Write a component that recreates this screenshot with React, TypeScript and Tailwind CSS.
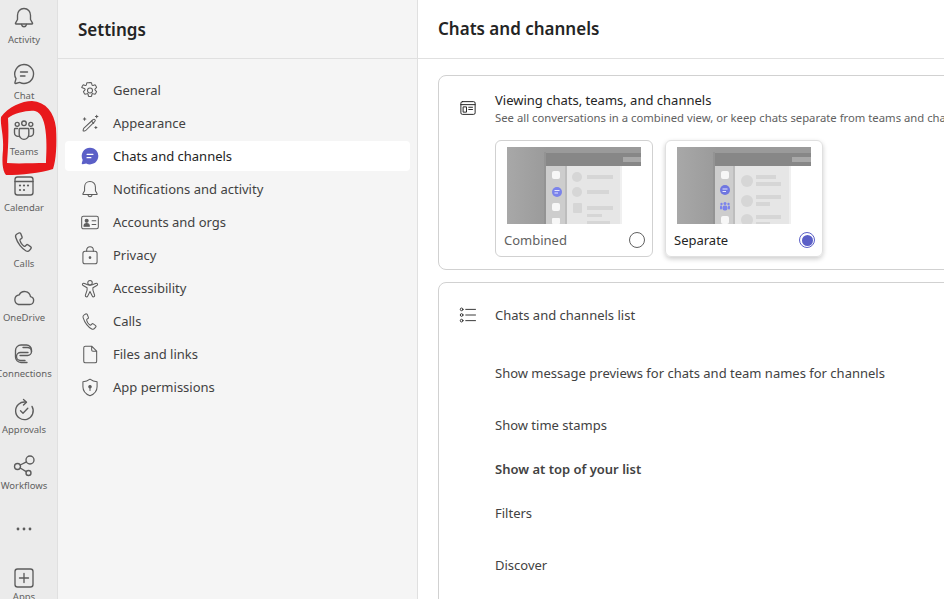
import React from "react";

const S = ({ children, size = 24, sw = 1.35, color = "#5c5c5c" }: { children: React.ReactNode; size?: number; sw?: number; color?: string }) => (
  <svg width={size} height={size} viewBox="0 0 24 24" fill="none" stroke={color} strokeWidth={sw} strokeLinecap="round" strokeLinejoin="round">
    {children}
  </svg>
);

const rail: { label: string; tight: boolean; icon: React.ReactNode }[] = [
  { label: "Activity", tight: false, icon: <S><path d="M12 2.500c-4 0-6.500 3-6.500 6.700v4.300l-2 3.600c-.2.400 0 .9.500.9h16c.5 0 .7-.5.500-.9l-2-3.600V9.200c0-3.700-2.500-6.700-6.500-6.700Z"/><path d="M9.500 18.500c.3 1.400 1.200 2.200 2.500 2.200s2.200-.8 2.500-2.200"/></S> },
  { label: "Chat", tight: false, icon: <S><path d="M12 2.500a9.500 9.500 0 1 1-4.400 17.900l-3.900 1.100c-.5.100-1-.3-.8-.9l1.100-3.900A9.500 9.500 0 0 1 12 2.500Z"/><path d="M8.500 10h7M8.500 14h4.500"/></S> },
  { label: "Teams", tight: false, icon: <S><circle cx="12" cy="5.300" r="2.300"/><circle cx="5.200" cy="6.300" r="2"/><circle cx="18.800" cy="6.300" r="2"/><path d="M8 10.500h8c.5 0 .8.300.8.800v5.200a4.800 4.800 0 0 1-9.600 0v-5.200c0-.5.300-.8.800-.8Z"/><path d="M5.500 10.500H3.300c-.5 0-.8.300-.8.800v3.700c0 2.200 1.800 3.500 3.900 3.300M18.500 10.500h2.200c.5 0 .8.300.8.800v3.700c0 2.200-1.800 3.500-3.900 3.300"/></S> },
  { label: "Calendar", tight: false, icon: <S><rect x="3" y="3" width="18" height="18" rx="2.500"/><path d="M3 7.500h18"/><g fill="#5c5c5c" stroke="none"><circle cx="8" cy="11.500" r="1.100"/><circle cx="12" cy="11.500" r="1.100"/><circle cx="16" cy="11.500" r="1.100"/><circle cx="8" cy="16" r="1.100"/><circle cx="12" cy="16" r="1.100"/></g></S> },
  { label: "Calls", tight: false, icon: <S><path d="M6.800 3 5 4c-1.200.7-1.700 2-1.300 3.300 1 3.200 2.500 6 4.400 8.400 1.800 2.300 3.800 4.200 6 5.300 1.200.6 2.600.3 3.400-.7l1.500-1.800c.4-.5.3-1.200-.2-1.600l-2.900-2.100c-.5-.3-1.100-.3-1.500.1l-1.100 1.100c-.4.4-.9.4-1.300.2-1-.7-2-1.700-2.700-2.800-.6-1-1-2-1.300-3-.1-.5 0-.9.4-1.200l1.200-.8c.5-.3.7-.9.5-1.400L8.700 3.600C8.400 2.900 7.500 2.600 6.800 3Z"/></S> },
  { label: "OneDrive", tight: true, icon: <S><path d="M6.500 18.500h11a4 4 0 0 0 1-7.900 6 6 0 0 0-11.300-1.700A4.900 4.900 0 0 0 6.500 18.500Z"/></S> },
  { label: "Connections", tight: true, icon: <S><path d="M19.500 9.500V8a5 5 0 0 0-5-5H9a5.500 5.500 0 0 0-5.500 5.500V15A5.500 5.500 0 0 0 9 20.500h6"/><path d="M8 13.500h7.500a4 4 0 0 0 0-8H11"/><path d="M16 10.500H8.500a4 4 0 0 0 0 8H13"/></S> },
  { label: "Approvals", tight: true, icon: <S><path d="M14 4.200A8.800 8.800 0 1 0 20 8.400"/><path d="M11.500 1.500 14.500 4.200 11.500 7"/><path d="m8.500 12.800 2.500 2.500 4.800-5"/></S> },
  { label: "Workflows", tight: true, icon: <S><circle cx="18" cy="6" r="4"/><circle cx="5.500" cy="12.500" r="3"/><circle cx="16.500" cy="19" r="2.500"/><path d="m8.200 11 6.300-3.200M8.200 14l6 3.600"/></S> },
];

const navIcon = (d: React.ReactNode) => <S size={21} sw={1.25}>{d}</S>;

const nav: { label: string; active?: boolean; icon: React.ReactNode }[] = [
  { label: "General", icon: navIcon(<><circle cx="12" cy="12" r="3"/><path d="M10.200 2.800c1.200-.3 2.400-.3 3.600 0l.6 2.400c.1.500.8.900 1.300.7l2.400-.7c.8.900 1.400 2 1.800 3.100l-1.700 1.700c-.4.400-.4 1.200 0 1.600l1.700 1.800c-.4 1.100-1 2.200-1.800 3.100l-2.400-.7c-.5-.2-1.200.2-1.300.7l-.6 2.400c-1.200.3-2.400.3-3.600 0l-.6-2.400c-.1-.5-.8-.9-1.300-.7l-2.400.7c-.8-.9-1.400-2-1.800-3.100l1.700-1.800c.4-.4.4-1.200 0-1.600L2.100 8.300c.4-1.100 1-2.200 1.800-3.100l2.400.7c.5.2 1.200-.2 1.300-.7l.6-2.400Z"/></>) },
  { label: "Appearance", icon: navIcon(<><path d="M15.500 7.500c.8-.8 1.900-.8 2.400-.2.600.6.500 1.600-.3 2.400L7.200 20.100c-.6.600-3.100 1.200-3.400.9-.3-.3.3-2.800.9-3.400L15.500 7.500Z"/><path d="m13.800 9.200 2.600 2.600"/><path d="M20 2v3M18.500 3.500h3M5.500 5v3M4 6.500h3M19 15.500v2.500M17.800 16.800h2.500"/></>) },
  { label: "Chats and channels", active: true, icon: <svg width="20" height="20" viewBox="0 0 24 24"><path fill="#5b5fc7" d="M12 2a10 10 0 1 1-4.600 18.900l-4 1.100c-.8.200-1.500-.5-1.300-1.300l1.100-4A10 10 0 0 1 12 2Z"/><path d="M8.500 10h7M8.500 14h4.500" stroke="#fff" strokeWidth="1.600" strokeLinecap="round"/></svg> },
  { label: "Notifications and activity", icon: navIcon(<><path d="M12 2.500c-4 0-6.500 3-6.500 6.700v4.300l-2 3.600c-.2.400 0 .9.500.9h16c.5 0 .7-.5.500-.9l-2-3.600V9.200c0-3.700-2.500-6.700-6.500-6.700Z"/><path d="M9.500 18.500c.3 1.400 1.200 2.200 2.500 2.200s2.200-.8 2.500-2.200"/></>) },
  { label: "Accounts and orgs", icon: navIcon(<><rect x="2" y="4.500" width="20" height="15" rx="2"/><circle cx="8" cy="10" r="1.800" fill="#5c5c5c"/><path d="M4.800 16.500c0-4.200 6.400-4.200 6.400 0Z" fill="#5c5c5c"/><path d="M14.500 10H19M14.500 14.500H19"/></>) },
  { label: "Privacy", icon: navIcon(<><rect x="3.500" y="7" width="17" height="15" rx="2.500"/><path d="M8 7V5.500a4 4 0 0 1 8 0V7"/><circle cx="12" cy="14.500" r="1" fill="#5c5c5c"/></>) },
  { label: "Accessibility", icon: navIcon(<><circle cx="12" cy="5" r="2.700"/><path d="M3 6.500c.6-1 1.500-1 2.500-.5 2 1 4 2 6.500 2s4.500-1 6.500-2c1-.5 1.900-.5 2.500.5.400.8 0 1.500-.8 2L15.500 11v3l2 6c.3 1-.2 1.800-1 2-.8.2-1.400-.2-1.800-1L12 15.500 9.300 21c-.4.800-1 1.200-1.800 1-.8-.2-1.300-1-1-2l2-6v-3L3.800 8.500c-.8-.5-1.200-1.200-.8-2Z"/></>) },
  { label: "Calls", icon: navIcon(<path d="M6.800 3 5 4c-1.200.7-1.700 2-1.300 3.300 1 3.200 2.500 6 4.400 8.400 1.800 2.300 3.800 4.200 6 5.300 1.200.6 2.600.3 3.400-.7l1.500-1.800c.4-.5.3-1.200-.2-1.600l-2.900-2.100c-.5-.3-1.100-.3-1.500.1l-1.100 1.100c-.4.4-.9.4-1.300.2-1-.7-2-1.700-2.700-2.800-.6-1-1-2-1.300-3-.1-.5 0-.9.4-1.200l1.200-.8c.5-.3.7-.9.5-1.400L8.700 3.600C8.400 2.900 7.500 2.600 6.800 3Z"/>) },
  { label: "Files and links", icon: navIcon(<path d="M6.500 2h7.500l6 6v12c0 1.100-.9 2-2 2H6.500c-1.100 0-2-.9-2-2V4c0-1.100.9-2 2-2ZM14 2v4.500c0 .8.700 1.500 1.500 1.500H20"/>) },
  { label: "App permissions", icon: navIcon(<><path d="M12 2c2.500 2 5.200 3 8.500 3.200V11c0 5-3 8.700-8.500 11-5.500-2.300-8.500-6-8.500-11V5.200C6.800 5 9.500 4 12 2Z"/><circle cx="12" cy="11" r="1.500" fill="#5c5c5c"/><path d="M12 12v3.500"/></>) },
];

const Frame = ({ id, x, railW, listX, listW }: { id: string; x: number; railW: number; listX: number; listW: number }) => (
  <>
    <defs>
      <linearGradient id={id} x1="0" x2="1">
        <stop offset="0" stopColor="#a8a8a8" />
        <stop offset="0.3" stopColor="#9a9a9a" />
      </linearGradient>
    </defs>
    <rect width="134" height="77" fill={`url(#${id})`} />
    <rect x={x - 2} y="5" width="2" height="72" fill="#939393" />
    <rect x={x} y="6" width={134 - x} height="71" fill="#fff" />
    <rect x={x} y="6" width={134 - x} height="13" fill="#878787" />
    <rect x={x + 77} y="10" width={134 - x - 77} height="5" fill="#a8a8a8" />
    <rect x={x} y="19" width={railW} height="58" fill="#cdcdcd" />
    <rect x={listX} y="19" width={listW} height="58" fill="#e6e6e6" />
    <rect x={listX - 2} y="19" width="2" height="58" fill="#bdbdbd" />
    <rect x={listX + listW} y="19" width="2" height="58" fill="#f0f0f0" />
  </>
);

const Combined = () => (
  <svg width="134" height="77" viewBox="0 0 134 77" className="block">
    <Frame id="g1" x={39} railW={19} listX={60} listW={53} />
    <rect x="45" y="24" width="8" height="8" rx="2" fill="#f7f7f7"/>
    <circle cx="50" cy="45" r="5" fill="#7b83eb"/>
    <path d="M47.500 43.500h5M47.500 46h3.500" stroke="#e6e6ff" strokeWidth="1"/>
    <rect x="45" y="56" width="8" height="8" rx="2" fill="#f7f7f7"/>
    <rect x="45" y="71" width="8" height="6" rx="1" fill="#f7f7f7"/>
    <circle cx="70" cy="30" r="5" fill="#d6d6d6"/><rect x="80" y="28" width="26" height="4" fill="#d6d6d6"/>
    <circle cx="70" cy="45" r="5" fill="#d6d6d6"/><rect x="80" y="43" width="22" height="4" fill="#d6d6d6"/>
    <rect x="66" y="56" width="9" height="10" rx="1" fill="#d6d6d6"/>
    <rect x="80" y="59" width="26" height="4" fill="#d6d6d6"/><rect x="80" y="67" width="15" height="3" fill="#d6d6d6"/><rect x="80" y="74" width="23" height="3" fill="#d6d6d6"/>
  </svg>
);

const Separate = () => (
  <svg width="134" height="77" viewBox="0 0 134 77" className="block">
    <Frame id="g2" x={38} railW={18} listX={58} listW={54} />
    <rect x="44" y="24" width="8" height="8" rx="2" fill="#f7f7f7"/>
    <circle cx="48" cy="43" r="5" fill="#6f76e0"/>
    <path d="M45.500 42h5M45.500 44.500h3.500" stroke="#e6e6ff" strokeWidth="1"/>
    <circle cx="48" cy="56.500" r="1.500" fill="#7b83eb"/><circle cx="44.500" cy="57" r="1.200" fill="#7b83eb"/><circle cx="51.500" cy="57" r="1.200" fill="#7b83eb"/>
    <rect x="45.500" y="58.500" width="5" height="5" rx="2" fill="#7b83eb"/><rect x="43" y="58.500" width="2" height="4" rx="1" fill="#7b83eb"/><rect x="51" y="58.500" width="2" height="4" rx="1" fill="#7b83eb"/>
    <rect x="44" y="69" width="8" height="8" rx="2" fill="#f7f7f7"/>
    <circle cx="70" cy="34" r="6" fill="#d6d6d6"/><rect x="79" y="28" width="20" height="4" fill="#d6d6d6"/><rect x="79" y="35" width="25" height="4" fill="#d6d6d6"/>
    <circle cx="70" cy="54" r="6" fill="#d6d6d6"/><rect x="79" y="48" width="25" height="4" fill="#d6d6d6"/><rect x="79" y="55" width="14" height="4" fill="#d6d6d6"/>
    <circle cx="70" cy="73" r="6" fill="#d6d6d6"/><rect x="79" y="68" width="25" height="4" fill="#d6d6d6"/><rect x="79" y="75" width="14" height="2" fill="#d6d6d6"/>
  </svg>
);

export default function App() {
  return (
    <div className="flex h-[599px] w-[944px] overflow-hidden bg-white text-[13px] text-[#424242]" style={{ fontFamily: '"Noto Sans", sans-serif' }}>
      {/* App rail */}
      <aside className="relative h-full w-[58px] shrink-0 overflow-hidden border-r border-[#e0e0e0] bg-[#ebebeb] pt-[6px]">
        {rail.map((r) => (
          <div key={r.label} className="flex h-14 w-12 flex-col items-center">
            {r.icon}
            <span className={`whitespace-nowrap text-[9.5px] leading-[14px] text-[#616161] ${r.tight ? "mt-px" : "mt-[3px]"}`}>{r.label}</span>
          </div>
        ))}
        <div className="flex h-14 w-12 justify-center pt-[7px]">
          <S><g fill="#5c5c5c" stroke="none"><circle cx="6" cy="12" r="1.400"/><circle cx="12" cy="12" r="1.400"/><circle cx="18" cy="12" r="1.400"/></g></S>
        </div>
        <div className="flex h-14 w-12 flex-col items-center">
          <S><rect x="3" y="3" width="18" height="18" rx="2.500"/><path d="M12 7.500v9M7.500 12h9"/></S>
          <span className="whitespace-nowrap text-[9.5px] leading-[14px] text-[#616161]">Apps</span>
        </div>
        <svg className="pointer-events-none absolute left-0 top-0" width="58" height="180" viewBox="0 0 58 180">
          <path
            fill="#e8191c"
            fillRule="evenodd"
            d="M1 117C8 107 22 101 32 101C46 102 54 112 56 128C57 145 56 160 53 169C40 173 22 175 6 175C2 170 2 160 3 150C4 135 0 125 1 117ZM8 118C14 113 28 110 35 111C42 113 45 122 46 135C47 148 46 158 46 163C33 163 18 164 7 163C8 150 9 135 8 118Z"
          />
        </svg>
      </aside>

      {/* Settings nav */}
      <nav className="h-full w-[360px] shrink-0 border-r border-[#e0e0e0] bg-[#f5f5f5]">
        <div className="flex h-[59px] items-center border-b border-[#e0e0e0] pl-5 pt-0.5 text-[17px] font-semibold text-[#242424]">Settings</div>
        <ul className="flex flex-col gap-[3px] pl-[7px] pr-[7px] pt-4">
          {nav.map((n) => (
            <li key={n.label} className={`flex h-[30px] items-center gap-[13px] rounded pl-[15px] ${n.active ? "bg-white text-[#242424]" : ""}`}>
              <span className="flex h-5 w-5 items-center justify-center">{n.icon}</span>
              <span className="pt-0.5">{n.label}</span>
            </li>
          ))}
        </ul>
      </nav>

      {/* Main */}
      <main className="h-full min-w-0 flex-1 overflow-hidden">
        <div className="flex h-[59px] items-center border-b border-[#e0e0e0] pl-5 text-[17px] font-semibold text-[#242424]">Chats and channels</div>
        <div className="flex w-[600px] flex-col gap-[12px] pl-5 pt-4">
          <section className="flex h-[195px] rounded-lg border border-[#d1d1d1] pl-5 pt-[14px]">
            <div className="w-9 pt-[9px]">
              <S size={18} sw={1.300} color="#242424"><rect x="2.500" y="3.500" width="19" height="17" rx="2"/><path d="M2.500 7.500h19"/><rect x="6" y="10.500" width="4" height="7" /><path d="M13 11h5M13 14h5"/></S>
            </div>
            <div className="min-w-0 flex-1">
              <div className="leading-[20px] text-[#242424]">Viewing chats, teams, and channels</div>
              <div className="whitespace-nowrap text-[11.3px] leading-[16px] text-[#616161]">See all conversations in a combined view, or keep chats separate from teams and channels.</div>
              <div className="mt-[14px] flex gap-3">
                <div className="w-[158px] rounded-md border border-[#d1d1d1] pt-[6px]">
                  <div className="flex justify-center"><Combined /></div>
                  <div className="flex h-[32px] items-center justify-between pl-2 pr-[7px]">
                    <span className="pt-0.5 text-[#616161]">Combined</span>
                    <span className="h-4 w-4 rounded-full border border-[#616161]" />
                  </div>
                </div>
                <div className="w-[158px] rounded-md border border-[#e0e0e0] pt-[6px] shadow-[0_2px_5px_rgba(0,0,0,0.2)]">
                  <div className="flex justify-center"><Separate /></div>
                  <div className="flex h-[32px] items-center justify-between pl-2 pr-[7px]">
                    <span className="pt-0.5 text-[#242424]">Separate</span>
                    <span className="flex h-4 w-4 items-center justify-center rounded-full border border-[#5b5fc7]">
                      <span className="h-[11px] w-[11px] rounded-full bg-[#5b5fc7]" />
                    </span>
                  </div>
                </div>
              </div>
            </div>
          </section>
          <section className="h-[340px] rounded-lg border border-[#d1d1d1] pl-5 text-[#424242]">
            <div className="flex h-[64px] items-center">
              <div className="w-9">
                <S size={18} sw={1.200} color="#242424"><circle cx="3.500" cy="4.500" r="1.800"/><circle cx="3.500" cy="12" r="1.800"/><circle cx="3.500" cy="19.500" r="1.800"/><path d="M9 4.500h13M9 12h13M9 19.500h13"/></S>
              </div>
              <span className="pt-0.5">Chats and channels list</span>
            </div>
            <div className="pl-9">
              <div className="flex h-[52px] items-center pt-0.5">Show message previews for chats and team names for channels</div>
              <div className="flex h-[52px] items-center pt-0.5">Show time stamps</div>
              <div className="flex h-[36px] items-center pt-0.5 font-semibold">Show at top of your list</div>
              <div className="flex h-[52px] items-center pt-0.5">Filters</div>
              <div className="flex h-[52px] items-center pt-0.5">Discover</div>
            </div>
          </section>
        </div>
      </main>
    </div>
  );
}
